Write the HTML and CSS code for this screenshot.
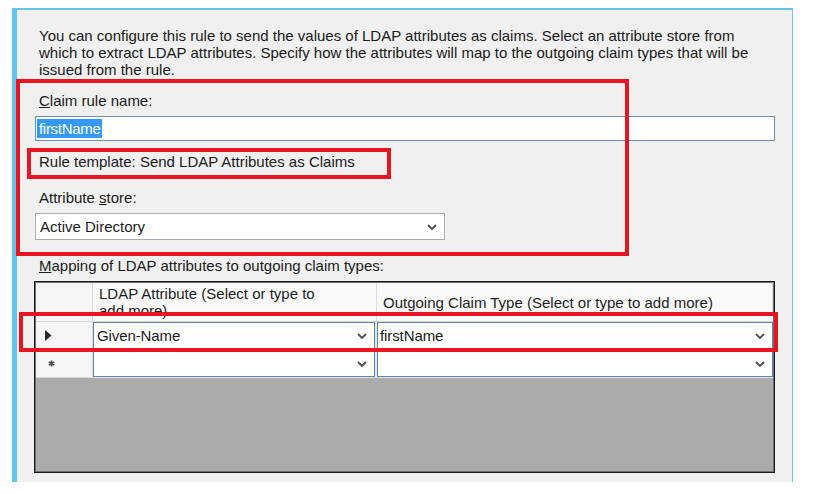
FILE: index.html
```html
<!DOCTYPE html>
<html>
<head>
<meta charset="utf-8">
<link rel="stylesheet" href="styles.css">
</head>
<body>
<div class="window">
  <div class="content">
    <p class="intro">You can configure this rule to send the values of LDAP attributes as claims. Select an attribute store from which to extract LDAP attributes. Specify how the attributes will map to the outgoing claim types that will be issued from the rule.</p>
    <div class="label label-name"><u>C</u>laim rule name:</div>
    <div class="textbox"><span class="sel">firstName</span></div>
    <div class="label label-template">Rule template: Send LDAP Attributes as Claims</div>
    <div class="label label-store">Attribute <u>s</u>tore:</div>
    <div class="combo">
      <span>Active Directory</span>
      <svg class="chev" width="10" height="6" viewBox="0 0 10 6"><path d="M1 1 L5 5 L9 1" fill="none" stroke="#505050" stroke-width="1.8"/></svg>
    </div>
    <div class="label label-map"><u>M</u>apping of LDAP attributes to outgoing claim types:</div>
    <div class="grid">
      <div class="row head">
        <div class="rh"></div>
        <div class="hc hc1"><span>LDAP Attribute (Select or type to add more)</span></div>
        <div class="hc"><span>Outgoing Claim Type (Select or type to add more)</span></div>
      </div>
      <div class="row data">
        <div class="rh"><svg width="7" height="11" viewBox="0 0 7 11"><polygon points="0,0 6.5,5.5 0,11" fill="#2a2a2a"/></svg></div>
        <div class="cell c1"><span>Given-Name</span><svg class="chev" width="10" height="6" viewBox="0 0 10 6"><path d="M1 1 L5 5 L9 1" fill="none" stroke="#505050" stroke-width="1.8"/></svg></div>
        <div class="cell c2"><span>firstName</span><svg class="chev" width="10" height="6" viewBox="0 0 10 6"><path d="M1 1 L5 5 L9 1" fill="none" stroke="#505050" stroke-width="1.8"/></svg></div>
      </div>
      <div class="row data">
        <div class="rh"><svg class="star" width="7" height="7" viewBox="0 0 7 7"><path d="M3.5 0.5 V6.5 M0.8 2 L6.2 5 M0.8 5 L6.2 2" stroke="#4a4a4a" stroke-width="1.6"/></svg></div>
        <div class="cell c1"><span></span><svg class="chev" width="10" height="6" viewBox="0 0 10 6"><path d="M1 1 L5 5 L9 1" fill="none" stroke="#505050" stroke-width="1.8"/></svg></div>
        <div class="cell c2"><span></span><svg class="chev" width="10" height="6" viewBox="0 0 10 6"><path d="M1 1 L5 5 L9 1" fill="none" stroke="#505050" stroke-width="1.8"/></svg></div>
      </div>
    </div>
  </div>
</div>
<div class="mark mark-top"></div>
<div class="mark mark-template"></div>
<div class="mark mark-row"></div>
</body>
</html>
```

FILE: styles.css
```css
html, body {
  margin: 0;
  padding: 0;
  background: #ffffff;
}
body {
  font-family: "Liberation Sans", Arial, sans-serif;
  font-size: 15px;
  line-height: 17px;
  color: #1a1a1a;
  width: 815px;
  height: 494px;
  overflow: hidden;
}
.window {
  box-sizing: border-box;
  margin: 8px 0 0 12px;
  width: 781px;
  height: 474px;
  background: #f0f0f0;
  border-left: 5px solid #62c5ec;
  border-top: 2px solid #62c5ec;
  border-right: 1px solid #62c5ec;
}
.content {
  padding: 16px 0 0 18px;
}
.intro {
  margin: 0 0 0 4px;
  width: 722px;
  padding-top: 1px;
}
.label {
  margin-left: 4px;
}
.label-name { margin-top: 14px; }
.label-template { margin-top: 12px; }
.label-store { margin-top: 19px; }
.label-map { margin-top: 17px; }
.textbox {
  box-sizing: border-box;
  margin-top: 7px;
  width: 740px;
  height: 25px;
  background: #fff;
  border: 1px solid #6d8fb3;
  display: flex;
  align-items: center;
  padding-left: 1px;
}
.sel {
  background: #3399ff;
  color: #fff;
  padding: 1px 2px 1px 2px;
  letter-spacing: -0.3px;
}
.combo {
  box-sizing: border-box;
  margin-top: 7px;
  width: 410px;
  height: 27px;
  background: #fff;
  border: 1px solid #acacac;
  display: flex;
  align-items: center;
  justify-content: space-between;
  padding: 0 7px 0 4px;
}
.grid {
  box-sizing: border-box;
  margin: 7px 0 0 -1px;
  width: 741px;
  height: 192px;
  background: #ababab;
  border: 1px solid #1b1b1b;
  box-shadow: inset 0 0 0 1px #6e6e6e;
  padding: 1px;
}
.row {
  display: grid;
  grid-template-columns: 57px 284px 396px;
}
.head {
  height: 38px;
  background: #f9f9f9;
  border-bottom: 1px solid #d9d9d9;
}
.head .rh {
  background: #f6f6f6;
}
.rh {
  box-sizing: border-box;
  border-right: 1px solid #d9d9d9;
  display: flex;
  align-items: center;
  padding-left: 9px;
}
.hc {
  box-sizing: border-box;
  border-right: 1px solid #dedede;
  display: flex;
  align-items: center;
  padding: 0 8px 0 6px;
  overflow: hidden;
  color: #1e1e1e;
}
.hc1 {
  padding-right: 40px;
}
.hc span { display: block; }
.data {
  height: 28px;
  background: #e6e6e6;
}
.data .rh {
  background: #f5f5f5;
  border-bottom: 1px solid #d9d9d9;
}
.data .rh .star { margin-left: 3px; }
.cell {
  box-sizing: border-box;
  height: 27px;
  background: #fff;
  border: 1px solid #5a84ad;
  display: flex;
  align-items: center;
  justify-content: space-between;
}
.c1 {
  margin-right: 2px;
  padding: 0 7px 0 3px;
}
.c2 {
  padding: 0 7px 0 2px;
}
.c2 span, .c1 span { letter-spacing: -0.1px; }
.chev { display: block; flex: none; }
.mark {
  position: absolute;
  box-sizing: border-box;
  border: 4px solid #e8141f;
}
.mark-top {
  left: 16px;
  top: 79px;
  width: 613px;
  height: 177px;
}
.mark-template {
  left: 27px;
  top: 148px;
  width: 364px;
  height: 31px;
}
.mark-row {
  left: 19px;
  top: 312px;
  width: 759px;
  height: 40px;
}
```
